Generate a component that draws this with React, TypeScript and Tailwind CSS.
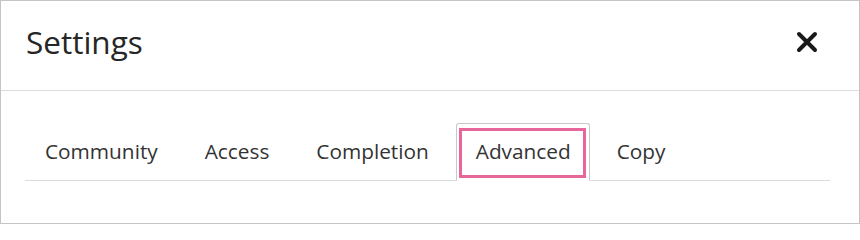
const tabs = ["Community", "Access", "Completion", "Advanced", "Copy"];

export default function App() {
  const active = "Advanced";

  return (
    <div
      className="w-[860px] h-[224px] border border-[#c4c4c4] bg-white text-[#333333]"
      style={{ fontFamily: '"Open Sans", "Noto Sans", sans-serif' }}
    >
      {/* header */}
      <div className="h-[90px] border-b border-[#dcdcdc] flex items-center justify-between pl-[25px] pr-[41px] pb-[7px]">
        <h1 className="text-[31.5px] leading-none text-[#262626]">Settings</h1>
        <button aria-label="Close" className="text-[#1a1a1a]">
          <svg width="22" height="22" viewBox="0 0 22 22" fill="none">
            <path
              d="M3 3 L19 19 M19 3 L3 19"
              stroke="currentColor"
              strokeWidth="4"
              strokeLinecap="round"
            />
          </svg>
        </button>
      </div>

      {/* tabs */}
      <div className="pt-[32px] pl-[24px] pr-[29px]">
        <div className="flex gap-[7px] border-b border-[#dcdcdc]">
          {tabs.map((t) =>
            t === active ? (
              <button
                key={t}
                className="-mb-px border border-[#c8c8c8] border-b-white bg-white rounded-t-[3px] pl-[2px] pr-[3px] pt-[4px] pb-[2px]"
              >
                <span className="block border-[3px] border-[#e8679a] pl-[14px] pr-[12px] pt-[6px] pb-[10px] text-[20.8px] leading-[28px] text-[#333333]">
                  {t}
                </span>
              </button>
            ) : (
              <button
                key={t}
                className="-mb-px border border-transparent px-[19px] pt-[13px] pb-[15px] text-[20.8px] leading-[28px] text-[#333333]"
              >
                {t}
              </button>
            )
          )}
        </div>
      </div>
    </div>
  );
}
